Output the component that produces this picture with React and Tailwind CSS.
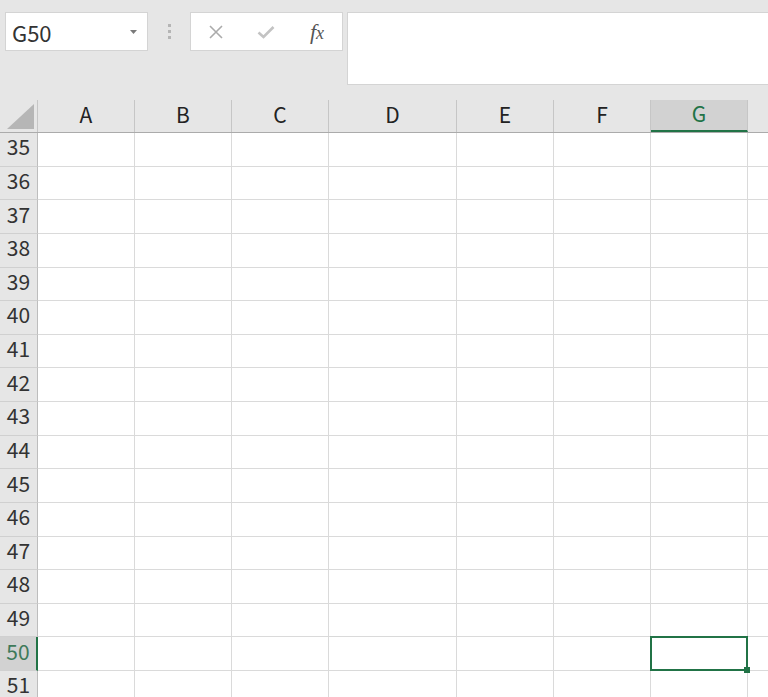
import React from "react";

const cols = [
  { name: "A", w: "w-[97px]" },
  { name: "B", w: "w-[97px]" },
  { name: "C", w: "w-[97px]" },
  { name: "D", w: "w-[128px]" },
  { name: "E", w: "w-[97px]" },
  { name: "F", w: "w-[97px]" },
  { name: "G", w: "w-[97px]" },
  { name: "", w: "w-[97px]" },
];

const rows = [35, 36, 37, 38, 39, 40, 41, 42, 43, 44, 45, 46, 47, 48, 49, 50, 51];

const selCol = "G";
const selRow = 50;

const FormulaBar = () => (
  <div className="flex items-start pt-[12px] pb-[15px]">
    <div className="ml-[5px] w-[143px] h-[39px] bg-white border border-[#d4d4d4] flex items-center pl-[6px] pr-[10px]">
      <span className="text-[22px] text-[#333] leading-none flex-1 pt-[1px]">G50</span>
      <svg width="7" height="4" viewBox="0 0 7 4">
        <path d="M0 0 L7 0 L3.5 4 Z" fill="#7a7a7a" />
      </svg>
    </div>
    <div className="w-[42px] h-[39px] flex flex-col items-center justify-center gap-[3px]">
      <span className="w-[3px] h-[3px] bg-[#b5b5b5]" />
      <span className="w-[3px] h-[3px] bg-[#b5b5b5]" />
      <span className="w-[3px] h-[3px] bg-[#b5b5b5]" />
    </div>
    <div className="w-[153px] h-[39px] bg-white border border-[#d4d4d4] flex items-center">
      <div className="w-[50px] flex justify-center">
        <svg width="16" height="16" viewBox="0 0 16 16">
          <path d="M2 2 L14 14 M14 2 L2 14" stroke="#ababab" strokeWidth="1.6" />
        </svg>
      </div>
      <div className="w-[50px] flex justify-center">
        <svg width="18" height="14" viewBox="0 0 18 14">
          <path d="M1.5 7.5 L6.5 12 L16.5 2" stroke="#c3c3c3" strokeWidth="2.6" fill="none" />
        </svg>
      </div>
      <div className="w-[50px] flex justify-center pl-[2px]">
        <span className="text-[22px] italic text-[#555] leading-none font-['Liberation_Serif',serif]">
          f<span className="text-[18px]">x</span>
        </span>
      </div>
    </div>
    <div className="ml-[4px] flex-1 h-[73px] bg-white border border-r-0 border-[#d4d4d4]" />
  </div>
);

const HeaderRow = () => (
  <div className="flex h-[33px] border-b border-[#ababab]">
    <div className="w-[38px] shrink-0 border-r border-[#c6c6c6] flex items-end justify-end pr-[3px] pb-[3px]">
      <svg width="27" height="25" viewBox="0 0 27 25">
        <path d="M27 0 L27 25 L0 25 Z" fill="#b6b6b6" />
      </svg>
    </div>
    {cols.map((c, i) => {
      const sel = c.name === selCol;
      return (
        <div
          key={i}
          className={`${c.w} shrink-0 border-r border-[#c6c6c6] flex items-center justify-center pb-[3px] text-[21px] leading-none ${
            sel ? "bg-[#d2d2d2] text-[#217346] border-b-2 border-b-[#217346]" : "text-[#222]"
          }`}
        >
          {c.name}
        </div>
      );
    })}
  </div>
);

const GridRow = ({ n }) => {
  const rowSel = n === selRow;
  return (
    <div className="flex h-[33.625px] shrink-0">
      <div
        className={`w-[38px] shrink-0 border-b border-[#d0d0d0] flex items-center justify-center pb-[5px] text-[21px] leading-none ${
          rowSel
            ? "bg-[#d2d2d2] text-[#3f7a5a] border-r-2 border-r-[#217346]"
            : "bg-[#e6e6e6] text-[#333] border-r border-r-[#bdbdbd]"
        }`}
      >
        {n}
      </div>
      {cols.map((c, i) => {
        const sel = rowSel && c.name === selCol;
        return (
          <div
            key={i}
            className={`${c.w} shrink-0 relative bg-white border-r border-b border-[#dadada] ${sel ? "z-10" : ""}`}
          >
            {sel && (
              <div className="absolute -left-px -top-px -right-px -bottom-px border-2 border-[#217346]">
                <div className="absolute -right-[4px] -bottom-[4px] w-[6px] h-[6px] bg-[#217346]" />
              </div>
            )}
          </div>
        );
      })}
    </div>
  );
};

export default function App() {
  return (
    <div className="w-full h-[697px] overflow-hidden bg-[#e6e6e6] font-['Noto_Sans_CJK_JP','Roboto',sans-serif]">
      <FormulaBar />
      <div className="overflow-hidden whitespace-nowrap">
        <HeaderRow />
        {rows.map((n) => (
          <GridRow key={n} n={n} />
        ))}
      </div>
    </div>
  );
}
